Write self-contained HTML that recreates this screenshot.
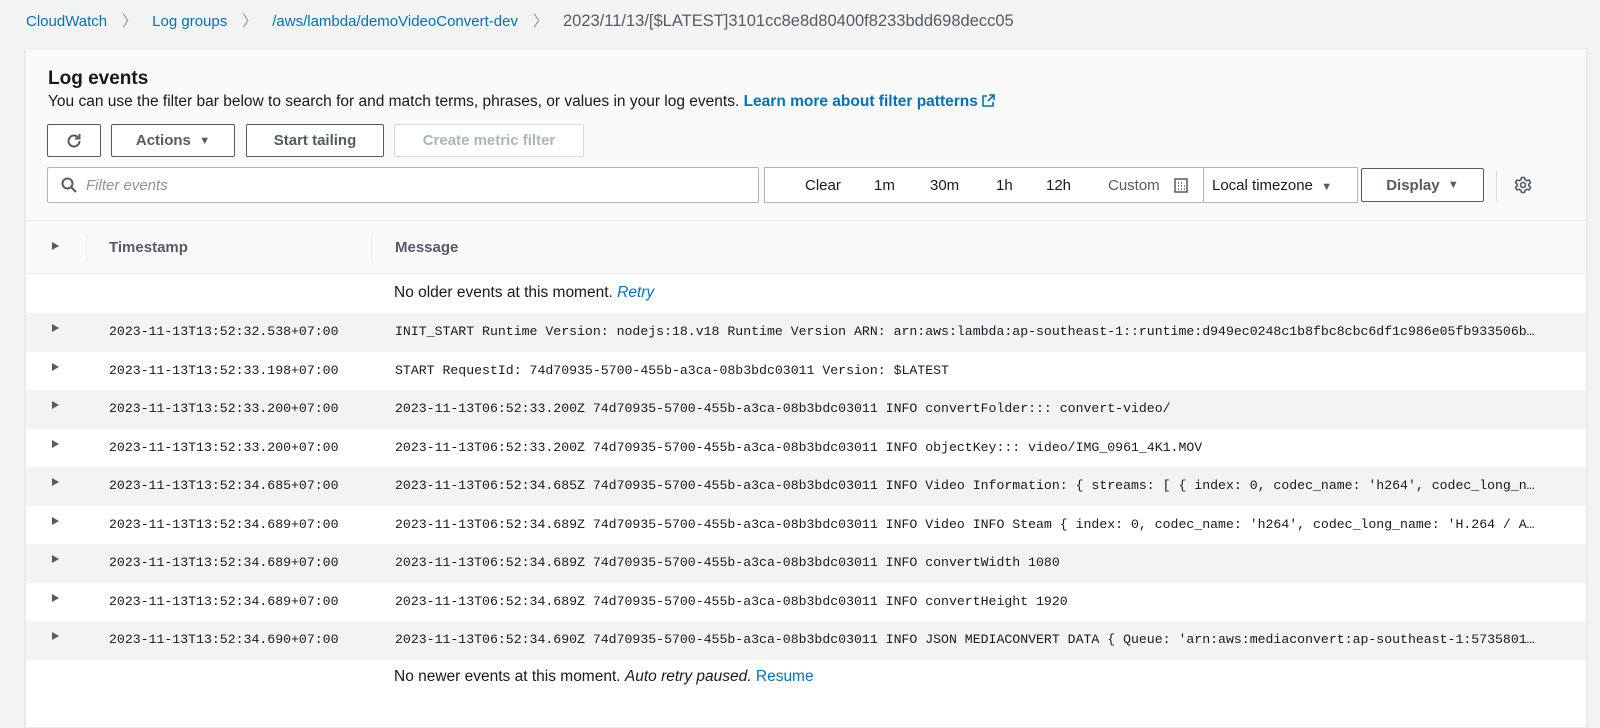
<!DOCTYPE html>
<html><head><meta charset="utf-8"><style>
*{box-sizing:border-box;margin:0;padding:0}
body{width:1600px;height:712px;overflow:hidden;background:#f2f3f3;font-family:"Liberation Sans",sans-serif;color:#16191f;font-size:14px;position:relative}
.a{position:absolute;white-space:nowrap}
.bc{top:10px;left:26px;font-size:15px;color:#0073bb}
.bc span.s{color:#879596;margin:0 15px}
.bc span.c{color:#545b64;font-size:16.5px}
.panel{position:absolute;left:25px;top:48px;width:1562px;height:680px;background:#fff;border:1px solid #eaeded;box-shadow:0 1px 1px rgba(0,28,36,.2)}
.hdr{position:absolute;left:0;top:0;width:100%;height:172px;background:#fafafa;border-bottom:1px solid #eaeded}
.btn{position:absolute;top:75px;height:33px;border:1px solid #545b64;border-radius:2px;background:#fff;font-weight:bold;color:#545b64;font-size:15px;display:flex;align-items:center;justify-content:center}
.mono{font-family:"Liberation Mono",monospace;font-size:13.2px}
.row{position:absolute;left:0;width:100%;height:38.5px}
.g{background:#f2f3f3}
.tri{position:absolute;left:26px;width:0;height:0;border-left:7px solid #545b64;border-top:4.5px solid transparent;border-bottom:4.5px solid transparent}
</style></head><body>
<div class="a bc">CloudWatch<span class="s">〉</span>Log groups<span class="s">〉</span>/aws/lambda/demoVideoConvert-dev<span class="s">〉</span><span class="c">2023/11/13/[$LATEST]3101cc8e8d80400f8233bdd698decc05</span></div>
<div class="panel">
<div class="hdr"></div>
<div class="a" style="left:22px;top:19px;font-size:19px;font-weight:bold">Log events</div>
<div class="a" style="left:22px;top:44px;font-size:15.5px">You can use the filter bar below to search for and match terms, phrases, or values in your log events. <b style="color:#0073bb">Learn more about filter patterns</b> <svg width="13" height="13" viewBox="0 0 13 13" style="vertical-align:-1px"><path d="M7 1h5v5M12 1L6 7M5 2H1v10h10V8" fill="none" stroke="#0073bb" stroke-width="1.6"/></svg></div>
<div class="btn" style="left:21px;width:54px"><svg width="18" height="18" viewBox="0 0 18 18"><path d="M14.5 9a5.5 5.5 0 1 1-1.6-3.9" fill="none" stroke="#545b64" stroke-width="2"/><path d="M14.5 2v4.5H10" fill="none" stroke="#545b64" stroke-width="2"/></svg></div>
<div class="btn" style="left:85px;width:124px">Actions&nbsp;&nbsp;<span style="font-size:11px">▼</span></div>
<div class="btn" style="left:220px;width:138px">Start tailing</div>
<div class="btn" style="left:368px;width:190px;border-color:#d5dbdb;color:#aab7b8">Create metric filter</div>
<div class="a" style="left:21px;top:118px;width:712px;height:36px;border:1px solid #aab7b8;border-radius:2px;background:#fff"><svg class="a" style="left:13px;top:9px" width="16" height="16" viewBox="0 0 16 16"><circle cx="6.5" cy="6.5" r="5" fill="none" stroke="#545b64" stroke-width="2"/><path d="M10 10l5 5" stroke="#545b64" stroke-width="2"/></svg><span class="a" style="left:38px;top:9px;color:#879596;font-style:italic;font-size:15px">Filter events</span></div>
<div class="a" style="left:738px;top:118px;width:594px;height:36px;border:1px solid #aab7b8;background:#fff;font-size:15px">
<span class="a" style="left:40px;top:9px">Clear</span><span class="a" style="left:109px;top:9px">1m</span><span class="a" style="left:165px;top:9px">30m</span><span class="a" style="left:231px;top:9px">1h</span><span class="a" style="left:281px;top:9px">12h</span><span class="a" style="left:343px;top:9px;color:#545b64">Custom</span>
<svg class="a" style="left:409px;top:10px" width="14" height="15" viewBox="0 0 14 15"><rect x="1" y="1" width="12" height="13" fill="none" stroke="#545b64" stroke-width="1.5"/><path d="M4 5h1M7 5h1M10 5h0M4 8h1M7 8h1M10 8h1M4 11h1M7 11h1M10 11h1" stroke="#545b64" stroke-width="1.5"/></svg>
<div class="a" style="left:438px;top:0;width:1px;height:34px;background:#aab7b8"></div>
<span class="a" style="left:447px;top:9px">Local timezone&nbsp;&nbsp;<span style="font-size:11px;color:#545b64">▼</span></span></div>
<div class="btn" style="left:1335px;top:119px;width:123px;height:34px">Display&nbsp;&nbsp;<span style="font-size:11px">▼</span></div>
<div class="a" style="left:1470px;top:122px;width:1px;height:30px;background:#d5dbdb"></div>
<svg class="a" style="left:1488px;top:127px" width="18" height="18" viewBox="0 0 18 18"><circle cx="9" cy="9" r="2.5" fill="none" stroke="#545b64" stroke-width="1.6"/><path d="M7.5 1.5h3l.5 2.2 1.8 1 2.2-.7 1.5 2.6-1.7 1.6v1.6l1.7 1.6-1.5 2.6-2.2-.7-1.8 1-.5 2.2h-3l-.5-2.2-1.8-1-2.2.7-1.5-2.6 1.7-1.6V8.2L1.5 6.6 3 4l2.2.7 1.8-1z" fill="none" stroke="#545b64" stroke-width="1.6" stroke-linejoin="round"/></svg>
<div class="a" style="left:0;top:173px;width:100%;height:52px;background:#fafafa;border-bottom:1px solid #eaeded">
<div class="tri" style="top:20px"></div>
<div class="a" style="left:60px;top:13px;width:1px;height:26px;background:#eaeded"></div>
<span class="a" style="left:83px;top:17px;font-weight:bold;color:#545b64;font-size:15px">Timestamp</span>
<div class="a" style="left:345px;top:13px;width:1px;height:26px;background:#eaeded"></div>
<span class="a" style="left:369px;top:17px;font-weight:bold;color:#545b64;font-size:15px">Message</span></div>
<div class="a" style="left:368px;top:235px;font-size:15.5px">No older events at this moment. <i style="color:#0073bb">Retry</i></div>
<div class="mono">
<div class="row g" style="top:264px"><div class="tri" style="top:11px"></div><span class="a" style="left:83px;top:11px">2023-11-13T13:52:32.538+07:00</span><span class="a" style="left:369px;top:11px">INIT_START Runtime Version: nodejs:18.v18 Runtime Version ARN: arn:aws:lambda:ap-southeast-1::runtime:d949ec0248c1b8fbc8cbc6df1c986e05fb933506b…</span></div>
<div class="row" style="top:302.5px"><div class="tri" style="top:11px"></div><span class="a" style="left:83px;top:11px">2023-11-13T13:52:33.198+07:00</span><span class="a" style="left:369px;top:11px">START RequestId: 74d70935-5700-455b-a3ca-08b3bdc03011 Version: $LATEST</span></div>
<div class="row g" style="top:341px"><div class="tri" style="top:11px"></div><span class="a" style="left:83px;top:11px">2023-11-13T13:52:33.200+07:00</span><span class="a" style="left:369px;top:11px">2023-11-13T06:52:33.200Z 74d70935-5700-455b-a3ca-08b3bdc03011 INFO convertFolder::: convert-video/</span></div>
<div class="row" style="top:379.5px"><div class="tri" style="top:11px"></div><span class="a" style="left:83px;top:11px">2023-11-13T13:52:33.200+07:00</span><span class="a" style="left:369px;top:11px">2023-11-13T06:52:33.200Z 74d70935-5700-455b-a3ca-08b3bdc03011 INFO objectKey::: video/IMG_0961_4K1.MOV</span></div>
<div class="row g" style="top:418px"><div class="tri" style="top:11px"></div><span class="a" style="left:83px;top:11px">2023-11-13T13:52:34.685+07:00</span><span class="a" style="left:369px;top:11px">2023-11-13T06:52:34.685Z 74d70935-5700-455b-a3ca-08b3bdc03011 INFO Video Information: { streams: [ { index: 0, codec_name: 'h264', codec_long_n…</span></div>
<div class="row" style="top:456.5px"><div class="tri" style="top:11px"></div><span class="a" style="left:83px;top:11px">2023-11-13T13:52:34.689+07:00</span><span class="a" style="left:369px;top:11px">2023-11-13T06:52:34.689Z 74d70935-5700-455b-a3ca-08b3bdc03011 INFO Video INFO Steam { index: 0, codec_name: 'h264', codec_long_name: 'H.264 / A…</span></div>
<div class="row g" style="top:495px"><div class="tri" style="top:11px"></div><span class="a" style="left:83px;top:11px">2023-11-13T13:52:34.689+07:00</span><span class="a" style="left:369px;top:11px">2023-11-13T06:52:34.689Z 74d70935-5700-455b-a3ca-08b3bdc03011 INFO convertWidth 1080</span></div>
<div class="row" style="top:533.5px"><div class="tri" style="top:11px"></div><span class="a" style="left:83px;top:11px">2023-11-13T13:52:34.689+07:00</span><span class="a" style="left:369px;top:11px">2023-11-13T06:52:34.689Z 74d70935-5700-455b-a3ca-08b3bdc03011 INFO convertHeight 1920</span></div>
<div class="row g" style="top:572px"><div class="tri" style="top:11px"></div><span class="a" style="left:83px;top:11px">2023-11-13T13:52:34.690+07:00</span><span class="a" style="left:369px;top:11px">2023-11-13T06:52:34.690Z 74d70935-5700-455b-a3ca-08b3bdc03011 INFO JSON MEDIACONVERT DATA { Queue: 'arn:aws:mediaconvert:ap-southeast-1:5735801…</span></div>
</div>
<div class="a" style="left:368px;top:619px;font-size:15.5px">No newer events at this moment. <i>Auto retry paused.</i> <span style="color:#0073bb">Resume</span></div>
</div>
</body></html>
